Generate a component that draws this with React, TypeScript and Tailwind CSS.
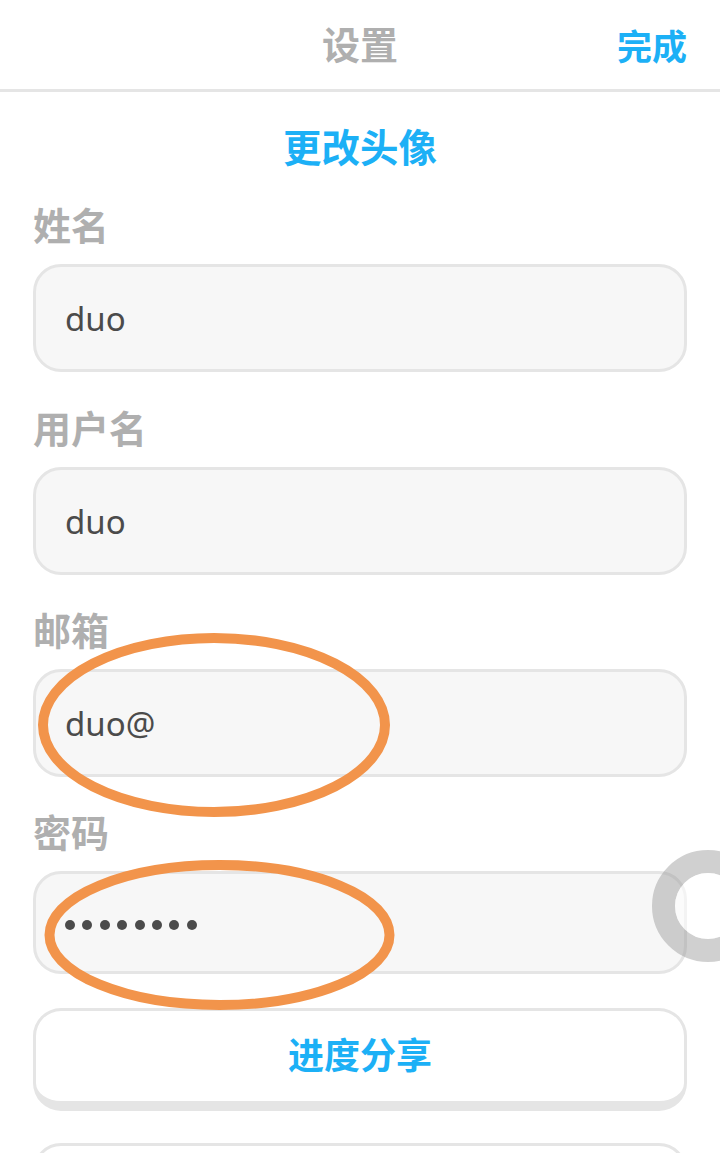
import React from 'react';

const font = { fontFamily: '"Noto Sans", "Noto Sans CJK SC", sans-serif' };

const Label: React.FC<{ text: string }> = ({ text }) => (
  <div className="h-[40px] flex items-center text-[38px] font-bold text-[#afafaf] leading-none">{text}</div>
);

const Field: React.FC<{ value: string; password?: boolean }> = ({ value, password }) => (
  <div
    className={`mt-[19px] w-full border-[3px] border-[#e5e5e5] bg-[#f7f7f7] rounded-[28px] flex items-center px-[29px] ${
      password ? 'h-[103px]' : 'h-[108px]'
    }`}
  >
    {password ? (
      <div className="flex gap-[7.4px] pt-1">
        {Array.from({ length: 8 }).map((_, i) => (
          <span key={i} className="w-[10px] h-[10px] rounded-full bg-[#4b4b4b]" />
        ))}
      </div>
    ) : (
      <span className="text-[33px] text-[#4b4b4b] leading-none">{value}</span>
    )}
  </div>
);

export default function App() {
  return (
    <div className="relative w-[720px] h-[1153px] overflow-hidden bg-white" style={font}>
      {/* header */}
      <div className="relative h-[92px] border-b-[3px] border-[#e5e5e5] flex items-center justify-center">
        <span className="text-[38px] font-bold text-[#afafaf] -mt-[1px]">设置</span>
        <span className="absolute right-[33px] top-[21px] text-[35px] font-bold text-[#1cb0f6]">完成</span>
      </div>

      <div className="px-[33px]">
        <div className="h-[40px] mt-[35px] flex items-center justify-center text-[38.5px] font-bold text-[#1cb0f6] leading-none">
          更改头像
        </div>

        <div className="mt-[38px]">
          <Label text="姓名" />
          <Field value="duo" />
        </div>
        <div className="mt-[36px]">
          <Label text="用户名" />
          <Field value="duo" />
        </div>
        <div className="mt-[35px]">
          <Label text="邮箱" />
          <Field value="duo@" />
        </div>
        <div className="mt-[35px]">
          <Label text="密码" />
          <Field value="" password />
        </div>

        <button className="mt-[34px] w-full h-[103px] bg-white border-[3px] border-b-[10px] border-[#e5e5e5] rounded-[28px] flex items-center justify-center text-[36px] font-bold text-[#1cb0f6]">
          进度分享
        </button>
        <div className="mt-[32px] w-full h-[103px] bg-white border-[3px] border-[#e5e5e5] rounded-[28px]" />
      </div>

      {/* annotation marks */}
      <svg className="absolute inset-0 pointer-events-none" width="720" height="1153" viewBox="0 0 720 1153">
        <ellipse cx="214" cy="725" rx="171" ry="87" fill="none" stroke="#f2944b" strokeWidth="10" />
        <ellipse cx="219.5" cy="935" rx="170" ry="70" fill="none" stroke="#f2944b" strokeWidth="10" />
        <circle cx="708" cy="906" r="44.5" fill="none" stroke="rgba(150,150,150,0.45)" strokeWidth="23" />
        <circle cx="708" cy="906" r="33" fill="rgba(255,255,255,0.55)" />
      </svg>
    </div>
  );
}
